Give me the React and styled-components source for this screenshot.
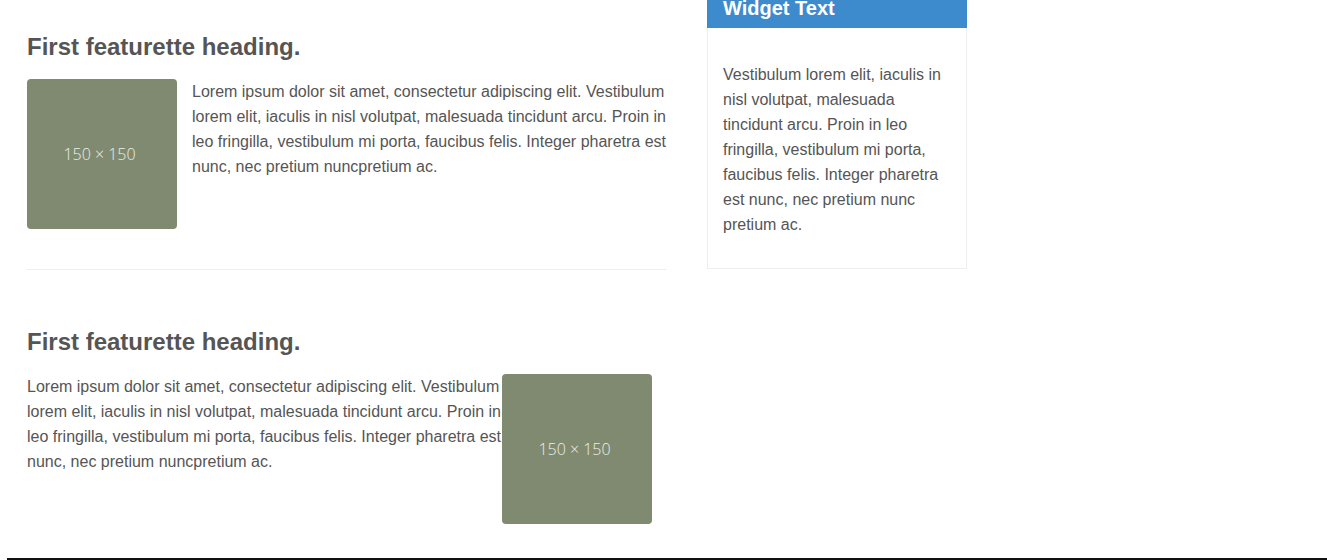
import React from "react";
import styled, { createGlobalStyle } from "styled-components";

const GlobalStyle = createGlobalStyle`
  html, body {
    margin: 0;
    padding: 0;
    background: #fff;
  }
  body {
    font-family: "Liberation Sans", Arial, sans-serif;
    color: #555;
    overflow: hidden;
  }
`;

const Page = styled.div`
  width: 1327px;
  height: 560px;
  display: flex;
  flex-direction: column;
  overflow: hidden;
`;

const Content = styled.div`
  flex: 1;
  display: flex;
  align-items: flex-start;
  gap: 40px;
  padding-left: 27px;
`;

const Main = styled.main`
  width: 640px;
  padding-top: 34px;
`;

const Featurette = styled.section`
  padding-bottom: ${(p) => p.$bottom || 0}px;
`;

const Heading = styled.h2`
  margin: 0 0 19px;
  font-size: 24px;
  line-height: 26px;
  font-weight: bold;
  color: #555;
`;

const Media = styled.div`
  display: flex;
  align-items: flex-start;
  gap: ${(p) => p.$gap}px;
`;

const Placeholder = styled.div`
  flex: 0 0 150px;
  width: 150px;
  height: 150px;
  margin-right: ${(p) => p.$mr || 0}px;
  border-radius: 4px;
  background: #7f8a70;
  color: #eceee8;
  display: flex;
  align-items: center;
  justify-content: center;
  padding-right: 5px;
  box-sizing: border-box;
  font-family: "Open Sans", sans-serif;
  font-weight: 300;
  font-size: 16px;
`;

const Body = styled.p`
  flex: 1;
  margin: 0;
  font-size: 16px;
  line-height: 25px;
  color: #555;
`;

const Divider = styled.hr`
  margin: 0 0 59px;
  border: 0;
  border-top: 1px solid #eee;
`;

const Sidebar = styled.aside`
  width: 260px;
`;

const Widget = styled.div`
  border: 1px solid #eee;
  border-top: 0;
`;

const WidgetHeader = styled.h3`
  margin: 0 -1px;
  height: 28px;
  padding: 0 16px;
  background: #3d8bcd;
  color: #fff;
  font-size: 20px;
  line-height: 16px;
  font-weight: bold;
`;

const WidgetBody = styled.div`
  padding: 34px 15px 31px;
`;

const Footer = styled.footer`
  margin-left: 7px;
  height: 0;
  border-top: 2px solid #111;
`;

const lorem =
  "Lorem ipsum dolor sit amet, consectetur adipiscing elit. Vestibulum lorem elit, iaculis in nisl volutpat, malesuada tincidunt arcu. Proin in leo fringilla, vestibulum mi porta, faucibus felis. Integer pharetra est nunc, nec pretium nuncpretium ac.";

export default function App() {
  return (
    <>
      <GlobalStyle />
      <Page>
        <Content>
          <Main>
            <Featurette $bottom={40}>
              <Heading>First featurette heading.</Heading>
              <Media $gap={15}>
                <Placeholder>150 × 150</Placeholder>
                <Body>{lorem}</Body>
              </Media>
            </Featurette>
            <Divider />
            <Featurette>
              <Heading>First featurette heading.</Heading>
              <Media $gap={0}>
                <Body>{lorem}</Body>
                <Placeholder $mr={15}>150 × 150</Placeholder>
              </Media>
            </Featurette>
          </Main>
          <Sidebar>
            <Widget>
              <WidgetHeader>Widget Text</WidgetHeader>
              <WidgetBody>
                <Body>
                  Vestibulum lorem elit, iaculis in nisl volutpat, malesuada
                  tincidunt arcu. Proin in leo fringilla, vestibulum mi porta,
                  faucibus felis. Integer pharetra est nunc, nec pretium nunc
                  pretium ac.
                </Body>
              </WidgetBody>
            </Widget>
          </Sidebar>
        </Content>
        <Footer />
      </Page>
    </>
  );
}
